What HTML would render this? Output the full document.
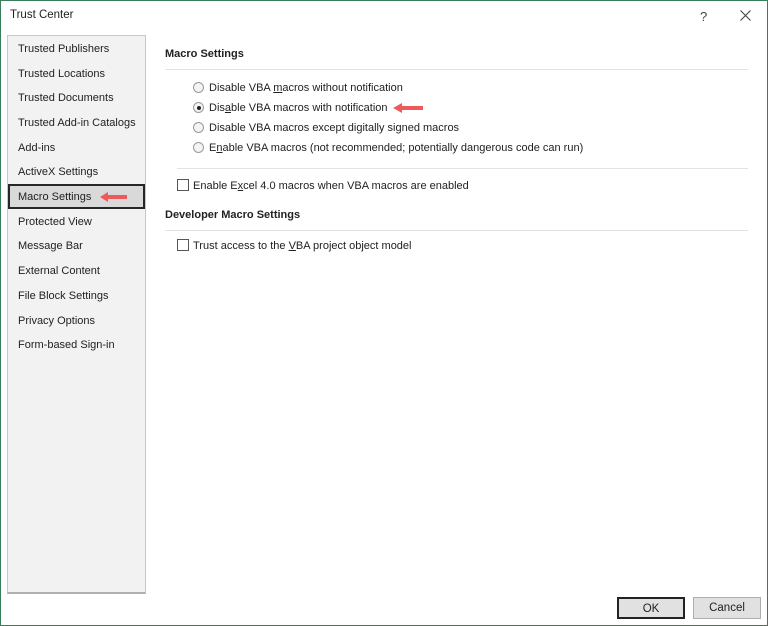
<!DOCTYPE html>
<html><head><style>
*{margin:0;padding:0;box-sizing:border-box}
body{width:768px;height:626px;background:#fff;font-family:"Liberation Sans",sans-serif;font-size:11px;color:#222;position:relative;overflow:hidden}
.frame{position:absolute;left:0;top:0;width:768px;height:626px;border:1px solid #3b7d5b}
.a{position:absolute;white-space:nowrap}
.left{position:absolute;left:7px;top:35px;width:139px;height:559px;background:#f2f2f2;border:1px solid #c8c8c8;border-bottom:2px solid #b0b0b0}
.li{position:absolute;left:10px}
.sel{position:absolute;left:0px;top:148px;width:137px;height:25px;background:#d9d9d9;border:2px solid #262626}
.hr{position:absolute;height:1px;background:#e3e3e3}
.radio{position:absolute;width:11px;height:11px;border:1px solid #9a9a9a;border-radius:50%;background:#f4f4f4}
.dot{position:absolute;left:2.5px;top:2.5px;width:4px;height:4px;border-radius:50%;background:#222}
.cb{position:absolute;width:12px;height:12px;border:1px solid #555;background:#fff}
.btn{position:absolute;top:597px;height:22px;background:#e1e1e1;border:1px solid #adadad;text-align:center;line-height:20px;font-size:11.5px}
u{text-decoration:underline}
b{font-weight:bold}
</style></head><body>
<div class="frame"></div>
<div class="a" style="left:10px;top:9px;font-size:11.5px">Trust Center</div>
<div class="a" style="left:700px;top:9px;font-size:13px;color:#444">?</div>
<svg class="a" style="left:740px;top:10px" width="11" height="11"><path d="M0.5 0.5L10.5 10.5M10.5 0.5L0.5 10.5" stroke="#444" stroke-width="1.1"/></svg>
<div class="left">
<div class="sel"></div>
<div class="li" style="top:7px">Trusted Publishers</div>
<div class="li" style="top:32px">Trusted Locations</div>
<div class="li" style="top:56px">Trusted Documents</div>
<div class="li" style="top:81px">Trusted Add-in Catalogs</div>
<div class="li" style="top:106px">Add-ins</div>
<div class="li" style="top:130px">ActiveX Settings</div>
<div class="li" style="top:155px">Macro Settings</div>
<div class="li" style="top:180px">Protected View</div>
<div class="li" style="top:204px">Message Bar</div>
<div class="li" style="top:229px">External Content</div>
<div class="li" style="top:254px">File Block Settings</div>
<div class="li" style="top:279px">Privacy Options</div>
<div class="li" style="top:303px">Form-based Sign-in</div>
</div>
<svg class="a" style="left:99px;top:191px" width="30" height="12"><path d="M1 6L9 1V4H28V8H9V11Z" fill="#f0595a"/></svg>
<div class="a" style="left:165px;top:48px"><b>Macro Settings</b></div>
<div class="hr" style="left:165px;top:69px;width:583px"></div>
<div class="radio" style="left:193px;top:82px"></div>
<div class="a" style="left:209px;top:82px">Disable VBA <u>m</u>acros without notification</div>
<div class="radio" style="left:193px;top:102px"><div class="dot"></div></div>
<div class="a" style="left:209px;top:102px">Dis<u>a</u>ble VBA macros with notification</div>
<svg class="a" style="left:392px;top:102px" width="32" height="12"><path d="M1 6L10 1V4H31V8H10V11Z" fill="#f0595a"/></svg>
<div class="radio" style="left:193px;top:122px"></div>
<div class="a" style="left:209px;top:122px">Disable VBA macros except digitally signed macros</div>
<div class="radio" style="left:193px;top:142px"></div>
<div class="a" style="left:209px;top:142px">E<u>n</u>able VBA macros (not recommended; potentially dangerous code can run)</div>
<div class="hr" style="left:177px;top:168px;width:571px"></div>
<div class="cb" style="left:177px;top:179px"></div>
<div class="a" style="left:193px;top:180px">Enable E<u>x</u>cel 4.0 macros when VBA macros are enabled</div>
<div class="a" style="left:165px;top:209px"><b>Developer Macro Settings</b></div>
<div class="hr" style="left:165px;top:230px;width:583px"></div>
<div class="cb" style="left:177px;top:239px"></div>
<div class="a" style="left:193px;top:240px">Trust access to the <u>V</u>BA project object model</div>
<div class="btn" style="left:617px;width:68px;border:2px solid #222">OK</div>
<div class="btn" style="left:693px;width:68px">Cancel</div>
</body></html>
